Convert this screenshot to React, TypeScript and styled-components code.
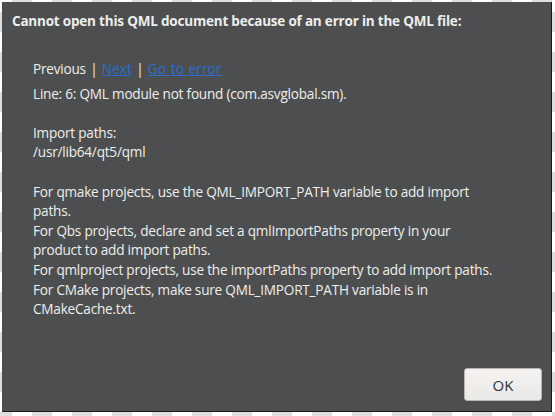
import React from "react";
import styled, { createGlobalStyle } from "styled-components";

const GlobalStyle = createGlobalStyle`
  html, body {
    margin: 0;
    padding: 0;
  }
  body {
    width: 555px;
    height: 416px;
    overflow: hidden;
    font-family: "Open Sans", "DejaVu Sans", sans-serif;
  }
`;

const Canvas = styled.div`
  width: 555px;
  height: 416px;
  box-sizing: border-box;
  padding: 2px 0 0 2px;
  background-color: #ffffff;
  background-image:
    linear-gradient(45deg, #dedede 25%, transparent 25%, transparent 75%, #dedede 75%),
    linear-gradient(45deg, #dedede 25%, transparent 25%, transparent 75%, #dedede 75%);
  background-size: 40px 40px;
  background-position: -8px -8px, 12px 12px;
`;

const Dialog = styled.div`
  width: 550px;
  height: 410px;
  box-sizing: border-box;
  background: #4d4e50;
  border-right: 1px solid #1b1b1b;
  border-bottom: 1px solid #1b1b1b;
  display: flex;
  flex-direction: column;
  color: #eeeeec;
`;

const Title = styled.div`
  padding: 9px 0 0 10px;
  font-size: 13.5px;
  letter-spacing: -0.2px;
  font-weight: 700;
  line-height: 20px;
`;

const Body = styled.div`
  padding: 28px 0 0 31px;
  font-size: 13.6px;
  letter-spacing: -0.22px;
  line-height: 19.6px;
  flex: 1;
`;

const Nav = styled.div`
  margin-bottom: 5px;
  word-spacing: 1px;
`;

const Link = styled.a`
  color: #2a6fd0;
  text-decoration: underline;
  letter-spacing: 0.1px;
  cursor: pointer;
`;

const Line = styled.div<{ $gap?: boolean }>`
  white-space: nowrap;
  margin-top: ${(p) => (p.$gap ? "19.6px" : "0")};
`;

const Footer = styled.div`
  display: flex;
  justify-content: flex-end;
  padding: 0 9px 10px 0;
`;

const Button = styled.button`
  width: 78px;
  height: 33px;
  box-sizing: border-box;
  border: 1px solid #b8b4ae;
  border-radius: 3px;
  background: linear-gradient(#f4f3f2, #ebe9e7);
  color: #2e3436;
  font-family: "Open Sans", "DejaVu Sans", sans-serif;
  font-size: 15px;
  cursor: pointer;
`;

export default function App() {
  return (
    <>
      <GlobalStyle />
      <Canvas>
        <Dialog>
          <Title>Cannot open this QML document because of an error in the QML file:</Title>
          <Body>
            <Nav>
              Previous | <Link>Next</Link> | <Link>Go to error</Link>
            </Nav>
            <Line>Line: 6: QML module not found (com.asvglobal.sm).</Line>
            <Line $gap>Import paths:</Line>
            <Line>/usr/lib64/qt5/qml</Line>
            <Line $gap>For qmake projects, use the QML_IMPORT_PATH variable to add import</Line>
            <Line>paths.</Line>
            <Line>For Qbs projects, declare and set a qmlImportPaths property in your</Line>
            <Line>product to add import paths.</Line>
            <Line>For qmlproject projects, use the importPaths property to add import paths.</Line>
            <Line>For CMake projects, make sure QML_IMPORT_PATH variable is in</Line>
            <Line>CMakeCache.txt.</Line>
          </Body>
          <Footer>
            <Button>OK</Button>
          </Footer>
        </Dialog>
      </Canvas>
    </>
  );
}
